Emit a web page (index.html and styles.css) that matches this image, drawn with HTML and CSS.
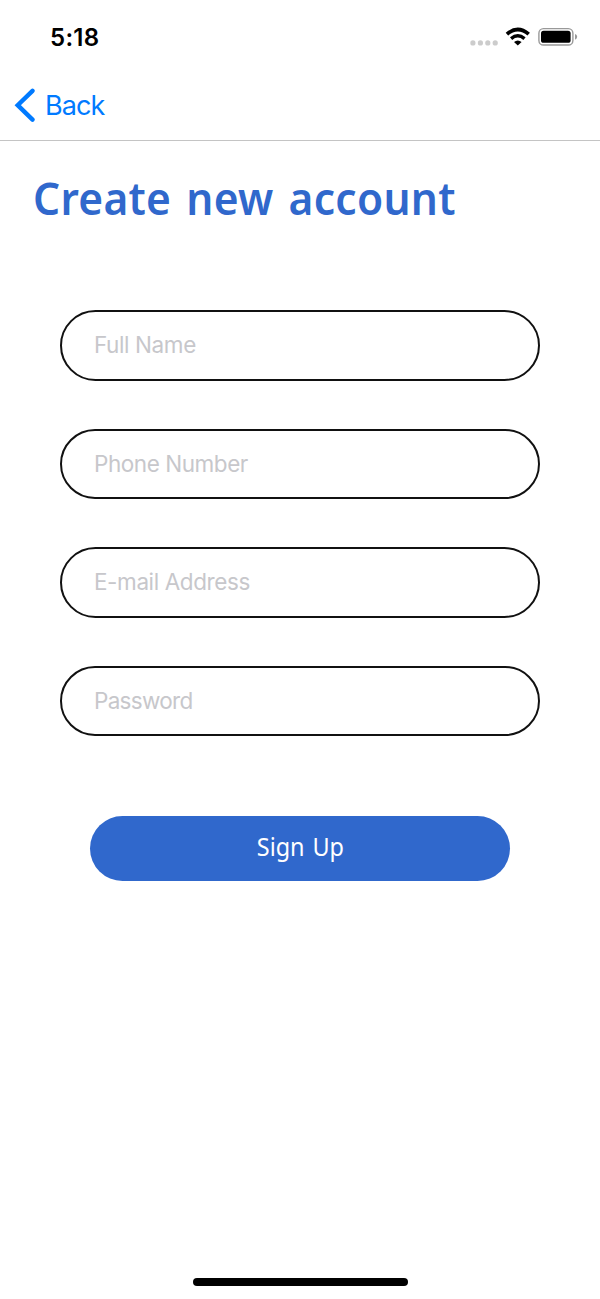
FILE: index.html
```html
<!DOCTYPE html>
<html lang="en">
<head>
<meta charset="utf-8">
<title>Create new account</title>
<link rel="stylesheet" href="styles.css">
</head>
<body>
<div class="screen">
  <header class="status-bar">
    <span class="time">5:18</span>
    <svg class="status-icons" width="108" height="20" viewBox="470 27 108 20">
      <g fill="#ccc"><circle cx="472.9" cy="42.9" r="2.6"/><circle cx="480.4" cy="42.9" r="2.6"/><circle cx="487.8" cy="42.9" r="2.6"/><circle cx="495.2" cy="42.9" r="2.6"/></g>
      <path d="M514 42Q517.8 38.8 521.6 42L517.8 45.6Z"/>
      <path d="M506.9 34.2Q517.8 24.8 528.7 34.2" fill="none" stroke="#000" stroke-width="3.7"/>
      <path d="M511.1 38.6Q517.8 32.9 524.5 38.6" fill="none" stroke="#000" stroke-width="3.4"/>
      <rect x="538.9" y="28.6" width="34" height="16.4" rx="4.6" fill="none" stroke="#999" stroke-width="1.4"/>
      <rect x="541" y="30.7" width="29.6" height="12.1" rx="2.6"/>
      <path d="M575 33.9Q577.2 34.6 577.2 36.8T575 39.8Z" fill="#999"/>
    </svg>
  </header>
  <nav class="nav-bar">
    <a class="back">
      <svg class="chevron" width="22" height="34" viewBox="0 0 22 34"><path d="M18.5 2.8L3.7 17.2L18.5 31.6" fill="none" stroke="#007aff" stroke-width="4.4" stroke-linecap="round"/></svg>
      <span class="back-label">Back</span>
    </a>
  </nav>
  <main class="content">
    <h1 class="title">Create new account</h1>
    <form class="form">
      <label class="field"><span class="hint name">Full Name</span></label>
      <label class="field"><span class="hint phone">Phone Number</span></label>
      <label class="field"><span class="hint email">E-mail Address</span></label>
      <label class="field"><span class="hint password">Password</span></label>
    </form>
    <button class="submit" type="button"><span class="submit-label">Sign Up</span></button>
  </main>
  <footer class="home-area"><div class="home-indicator"></div></footer>
</div>
</body>
</html>
```
FILE: styles.css
```css
* { box-sizing: border-box; }
body { margin: 0; background: #fff; font-family: Inter, "Liberation Sans", sans-serif; }
.screen { width: 600px; height: 1299px; display: flex; flex-direction: column; overflow: hidden; }
.status-bar { height: 72px; padding: 0 22px 0 50px; display: flex; justify-content: space-between; }
.time { margin-top: 23px; line-height: 30px; font-size: 24px; letter-spacing: 0.3px; font-weight: 600; color: #000; }
.status-icons { margin-top: 27px; }
.nav-bar { height: 69px; border-bottom: 1px solid #c4c4c4; padding: 16px 0 0 14px; }
.back { display: flex; width: max-content; gap: 9px; color: #007aff; }
.back-label { font-size: 27px; line-height: 34px; letter-spacing: -0.9px; padding-top: 1px; }
.content { flex: 1; display: flex; flex-direction: column; align-items: center; }
.title { align-self: flex-start; margin: 26px 0 0 32.5px; height: 60px; line-height: 60px; font-family: "Noto Sans", "Open Sans", sans-serif; font-size: 45.5px; font-weight: 600; letter-spacing: 0.3px; word-spacing: 4px; color: #3068cc; white-space: nowrap; transform: scaleX(0.934); transform-origin: left center; }
.form { width: 480px; margin-top: 83px; display: flex; flex-direction: column; gap: 48px; }
.field { height: 71px; border: 2px solid #111; border-radius: 36px; padding: 0 32px 2px; display: flex; align-items: center; }
.field:nth-child(even) { height: 70px; padding-bottom: 1px; }
.hint { font-size: 22.5px; line-height: 30px; color: #c7c7cb; }
.name { letter-spacing: -0.4px; }
.phone { letter-spacing: -0.45px; }
.email { letter-spacing: -0.4px; }
.password { letter-spacing: -0.7px; }
.submit { width: 420px; height: 65px; margin-top: 80px; padding: 0 0 6px; border: 0; border-radius: 33px; background: #3068cc; color: #fff; font-family: "Noto Sans", "Open Sans", sans-serif; font-size: 26px; line-height: 36px; }
.submit-label { display: inline-block; word-spacing: 2px; transform: scaleX(0.9); }
.home-area { height: 21px; display: flex; justify-content: center; }
.home-indicator { width: 215px; height: 8px; border-radius: 4px; background: #000; }
```
